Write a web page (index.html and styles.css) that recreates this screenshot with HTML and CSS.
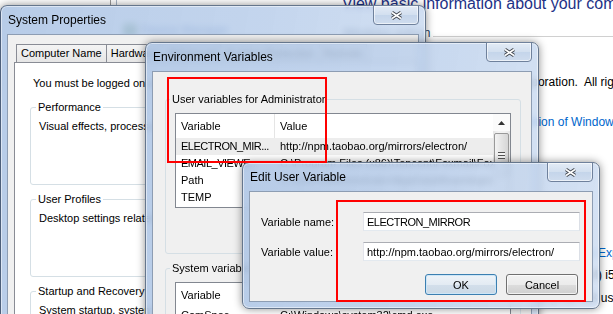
FILE: index.html
```html
<!DOCTYPE html>
<html lang="en">
<head>
  <meta charset="UTF-8"/>
  <title>Environment Variables</title>
  <link rel="stylesheet" href="styles.css">
</head>
<body>
  <div class="desktop">

    <!-- control panel page behind the dialogs -->
    <div class="cp">
      <div class="cp-nav">
        <div class="nav-top"></div>
        <div class="nav-item"><span class="nav-icon"></span>Device Manager</div>
      </div>
      <div class="cp-main">
        <div class="cp-title">View basic information about your computer</div>
        <div class="cp-section"><span>Windows edition</span><span class="cp-rule"></span></div>
        <div class="cp-row copy">Copyright © 2009 Microsoft Corporation.&nbsp; All rights reserved.</div>
        <div class="cp-row link more">Get more features with a new edition of Windows 7</div>
        <div class="cp-row link exp">Windows Experience Index</div>
        <div class="cp-row cpu">Intel(R) Core(TM) i5-2400 CPU @ 3.10GHz</div>
        <div class="cp-row ram">4.00 GB (3.16 GB usable)</div>
      </div>
    </div>

    <!-- System Properties -->
    <div class="win sysprops">
      <div class="titlebar">
        <span class="title">System Properties</span>
        <button class="close">
          <svg width="13" height="9" viewBox="0 0 13 9"><path d="M2 1.5L11 7.5M11 1.5L2 7.5" stroke="#3f444c" stroke-width="3.4"/><path d="M2 1.5L11 7.5M11 1.5L2 7.5" stroke="#fff" stroke-width="1.6"/></svg>
        </button>
      </div>
      <div class="client">
        <div class="tabs">
          <div class="tab">Computer Name</div>
          <div class="tab">Hardware</div>
          <div class="tab">Advanced</div>
          <div class="tab">System Protection</div>
          <div class="tab">Remote</div>
        </div>
        <div class="tabpanel">
          <p class="note">You must be logged on as an Administrator to make most of these changes.</p>
          <fieldset class="group sp-group">
            <legend>Performance</legend>
            <p>Visual effects, processor scheduling, memory usage, and virtual memory</p>
          </fieldset>
          <fieldset class="group sp-group">
            <legend>User Profiles</legend>
            <p>Desktop settings related to your logon</p>
          </fieldset>
          <fieldset class="group sp-group">
            <legend>Startup and Recovery</legend>
            <p>System startup, system failure, and debugging information</p>
          </fieldset>
        </div>
      </div>
    </div>

    <!-- Environment Variables -->
    <div class="win envvars">
      <div class="titlebar">
        <span class="title">Environment Variables</span>
        <button class="close">
          <svg width="13" height="9" viewBox="0 0 13 9"><path d="M2 1.5L11 7.5M11 1.5L2 7.5" stroke="#3f444c" stroke-width="3.4"/><path d="M2 1.5L11 7.5M11 1.5L2 7.5" stroke="#fff" stroke-width="1.6"/></svg>
        </button>
      </div>
      <div class="client">
        <fieldset class="group env-group uvars">
          <legend>User variables for Administrator</legend>
          <div class="list">
            <div class="list-main">
              <div class="list-head"><span class="c1">Variable</span><span class="c2">Value</span></div>
              <div class="list-row sel"><span class="c1 caps">ELECTRON_MIR...</span><span class="c2">http://npm.taobao.org/mirrors/electron/</span></div>
              <div class="list-row"><span class="c1 caps">EMAIL_VIEWE...</span><span class="c2">C:\Program Files (x86)\Tencent\Foxmail\Foxmail.exe</span></div>
              <div class="list-row"><span class="c1">Path</span><span class="c2">C:\Users\Administrator\AppData\Roaming\npm</span></div>
              <div class="list-row"><span class="c1">TEMP</span><span class="c2">%USERPROFILE%\AppData\Local\Temp</span></div>
            </div>
            <div class="vscroll">
              <div class="sb-arrow"><svg width="7" height="4" viewBox="0 0 7 4"><path d="M0 4L3.5 0L7 4Z" fill="#333"/></svg></div>
              <div class="sb-thumb"><span class="grip"></span></div>
            </div>
          </div>
        </fieldset>
        <fieldset class="group env-group svars">
          <legend>System variables</legend>
          <div class="list">
            <div class="list-main">
              <div class="list-head"><span class="c1">Variable</span><span class="c2">Value</span></div>
              <div class="list-row"><span class="c1">ComSpec</span><span class="c2">C:\Windows\system32\cmd.exe</span></div>
              <div class="list-row"><span class="c1 caps">FP_NO_HOST_C...</span><span class="c2">NO</span></div>
            </div>
          </div>
        </fieldset>
      </div>
    </div>

    <!-- Edit User Variable -->
    <div class="win editvar">
      <div class="titlebar">
        <span class="title">Edit User Variable</span>
        <button class="close">
          <svg width="13" height="9" viewBox="0 0 13 9"><path d="M2 1.5L11 7.5M11 1.5L2 7.5" stroke="#3f444c" stroke-width="3.4"/><path d="M2 1.5L11 7.5M11 1.5L2 7.5" stroke="#fff" stroke-width="1.6"/></svg>
        </button>
      </div>
      <div class="client edit-body">
        <div class="form">
          <label for="vname">Variable name:</label>
          <input id="vname" class="caps" type="text" value="ELECTRON_MIRROR">
          <label for="vvalue">Variable value:</label>
          <input id="vvalue" type="text" value="http://npm.taobao.org/mirrors/electron/">
        </div>
        <div class="actions">
          <button class="btn default">OK</button>
          <button class="btn">Cancel</button>
        </div>
      </div>
    </div>

    <!-- red annotation boxes -->
    <div class="mark mark-list"></div>
    <div class="mark mark-form"></div>
  </div>
</body>
</html>
```

FILE: styles.css
```css
* {
  box-sizing: border-box;
}

body {
  margin: 0;
  font-family: "Liberation Sans", Arial, sans-serif;
  font-size: 11px;
  color: #000;
  background: #fff;
}

p {
  margin: 0;
}

.desktop {
  position: relative;
  width: 613px;
  height: 314px;
  overflow: hidden;
  background: #fff;
}

/* Control panel in the background */
.cp {
  display: grid;
  grid-template-columns: 330px 1fr;
  font-size: 12px;
  line-height: 14px;
}

.nav-top {
  width: 7px;
  height: 6px;
  margin-left: 110px;
  border-left: 1px solid #9a9a9a;
  border-right: 1px solid #aab6c6;
}

.nav-item {
  display: flex;
  align-items: center;
  gap: 4px;
  margin: 17px 0 0 123px;
  color: #2a5aa8;
}

.nav-icon {
  width: 14px;
  height: 14px;
  border-radius: 2px;
  background: linear-gradient(#8fb48a, #4f7b58);
}

.cp-title {
  margin-top: -4px;
  padding-left: 12px;
  font-size: 16px;
  line-height: 16px;
  color: #1e3287;
  white-space: nowrap;
}

.cp-section {
  display: flex;
  margin-top: 14px;
  padding-left: 13px;
  color: #1e395b;
}

.cp-rule {
  flex: 1;
  height: 1px;
  align-self: flex-end;
  margin: 0 0 3px 3px;
  background: #d0d0d0;
}

.cp-row {
  white-space: nowrap;
}

.cp-row.link {
  color: #0066cc;
}

.copy { margin-top: 35px; padding-left: 33px; }
.more { margin-top: 26px; padding-left: 29px; }
.exp  { margin-top: 117px; padding-left: 216px; }
.cpu  { margin-top: 8px; padding-left: 178px; }
.ram  { margin-top: 9px; padding-left: 172px; }

/* Aero windows */
.win {
  position: absolute;
  display: flex;
  flex-direction: column;
  padding: 0 6px 6px;
  border: 1px solid #65768c;
  border-radius: 7px 7px 0 0;
  background: linear-gradient(100deg, rgba(172, 196, 228, 0.87) 0%, rgba(184, 205, 234, 0.84) 55%, rgba(204, 220, 241, 0.8) 100%);
  backdrop-filter: blur(3px);
  box-shadow: 0 0 8px rgba(0, 0, 0, 0.45), inset 0 0 0 1px rgba(255, 255, 255, 0.5);
}

.sysprops { left: 0; top: 5px; width: 426px; height: 330px; border-left-color: #4d5f7a; }
.envvars  { left: 145px; top: 42px; width: 394px; height: 300px; }
.editvar  { left: 242px; top: 162px; width: 358px; height: 147px; border-radius: 7px; }

.titlebar {
  display: flex;
  justify-content: space-between;
  align-items: flex-start;
  height: 28px;
  flex-shrink: 0;
}

.title {
  margin-left: 1px;
  padding-top: 7px;
  font-size: 12px;
  line-height: 14px;
  white-space: nowrap;
}

.close {
  display: flex;
  align-items: center;
  justify-content: center;
  width: 46px;
  height: 20px;
  margin-top: -1px;
  padding: 0;
  border: 1px solid #6f819c;
  border-radius: 0 0 4px 4px;
  background: linear-gradient(#e3ebf6, #d2dfef 50%, #c4d5ea 50%, #cfdcee);
  box-shadow: inset 0 0 0 1px rgba(255, 255, 255, 0.6);
}

.client {
  flex: 1;
  min-height: 0;
  overflow: hidden;
  border: 1px solid #8d9db3;
  background: #f0f0f0;
}

/* Segoe UI capitals are narrower than Arial's */
.caps {
  letter-spacing: -0.5px;
}

/* System Properties */
.sysprops .client {
  display: flex;
  flex-direction: column;
}

.tabs {
  display: flex;
  margin: 9px 0 0 8px;
}

.tab {
  flex-shrink: 0;
  height: 18px;
  margin-right: -1px;
  padding: 0 4px;
  border: 1px solid #898c95;
  border-bottom: none;
  background: linear-gradient(#f4f4f4, #e6e6e6);
  line-height: 17px;
  white-space: nowrap;
}

.tabpanel {
  flex: 1;
  margin-left: 6px;
  padding: 13px 12px 0 15px;
  overflow: hidden;
  border: 1px solid #898c95;
  background: #fff;
}

.note {
  margin: 0 0 10px 3px;
  line-height: 14px;
  white-space: nowrap;
}

.group {
  min-width: 0;
  margin: 0;
  border: 1px solid #d5dfe5;
  border-radius: 3px;
}

.group legend {
  padding: 0 2px;
  line-height: 14px;
  white-space: nowrap;
}

.sp-group {
  height: 85px;
  margin-bottom: 7px;
  padding: 0 5px;
}

.sp-group p {
  margin: 5px 0 0 3px;
  line-height: 14px;
  white-space: nowrap;
}

/* Environment Variables */
.env-group {
  width: 356px;
  margin-left: 12px;
  padding: 0 9px;
}

.env-group legend {
  margin-left: -5px;
}

.uvars {
  height: 162px;
  margin-top: 20px;
}

.svars {
  height: 200px;
  margin-top: 7px;
}

.list {
  display: flex;
  height: 95px;
  margin-top: 7px;
  border: 1px solid #828790;
  background: #fff;
}

.svars .list {
  height: 150px;
}

.list-main {
  flex: 1;
  min-width: 0;
  overflow: hidden;
}

.list-head,
.list-row {
  display: flex;
}

.list-head {
  height: 24px;
  line-height: 24px;
}

.list-head .c1 {
  border-right: 1px solid #e5e5e5;
}

.list-row {
  height: 17px;
  line-height: 17px;
}

.list-row.sel {
  background: #ededed;
}

.c1 {
  width: 99px;
  flex-shrink: 0;
  padding-left: 5px;
  overflow: hidden;
  white-space: nowrap;
}

.c2 {
  flex: 1;
  padding-left: 5px;
  overflow: hidden;
  white-space: nowrap;
}

.vscroll {
  display: flex;
  flex-direction: column;
  align-items: center;
  width: 17px;
  flex-shrink: 0;
  background: linear-gradient(90deg, #e6e6e6, #f3f3f3 30%, #f3f3f3 70%, #e6e6e6);
}

.sb-arrow {
  display: flex;
  align-items: center;
  justify-content: center;
  width: 17px;
  height: 17px;
  background: #fbfbfb;
}

.sb-thumb {
  display: flex;
  align-items: center;
  justify-content: center;
  width: 15px;
  height: 44px;
  margin-top: 2px;
  border: 1px solid #999;
  border-radius: 2px;
  background: linear-gradient(90deg, #f3f3f3, #e4e4e4 50%, #d6d6d6);
}

.grip {
  width: 7px;
  height: 7px;
  background: repeating-linear-gradient(#555 0 1px, #f6f6f6 1px 3px);
}

/* Edit User Variable */
.edit-body {
  padding: 20px 12px 0 11px;
}

.form {
  display: grid;
  grid-template-columns: 102px 1fr;
  row-gap: 11px;
  align-items: center;
}

.form label {
  line-height: 14px;
  white-space: nowrap;
}

.form input {
  height: 19px;
  margin: 0;
  padding: 0 3px;
  border: 1px solid;
  border-color: #abadb3 #dbdfe6 #e3e9ef #e2e3ea;
  background: #fff;
  font-family: "Liberation Sans", Arial, sans-serif;
  font-size: 11px;
  color: #000;
}

.actions {
  display: flex;
  justify-content: flex-end;
  gap: 9px;
  margin: 13px 2px 0 0;
}

.btn {
  width: 72px;
  height: 21px;
  padding: 0;
  border: 1px solid #707070;
  border-radius: 3px;
  background: linear-gradient(#f2f2f2, #ebebeb 50%, #dddddd 50%, #cfcfcf);
  box-shadow: inset 0 0 0 1px rgba(255, 255, 255, 0.7);
  font: 11px "Liberation Sans", Arial, sans-serif;
  color: #000;
}

.btn.default {
  border-color: #3c7fb1;
  background: linear-gradient(#eef3f8, #e3ebf3 50%, #d3dfeb 50%, #cbd9e6);
  box-shadow: inset 0 0 0 1px #cde6f7;
}

/* Red annotations drawn over the screenshot */
.mark {
  position: absolute;
  border: 2px solid #f00;
}

.mark-list { left: 167px; top: 77px; width: 160px; height: 86px; }
.mark-form { left: 336px; top: 200px; width: 250px; height: 102px; }
```
